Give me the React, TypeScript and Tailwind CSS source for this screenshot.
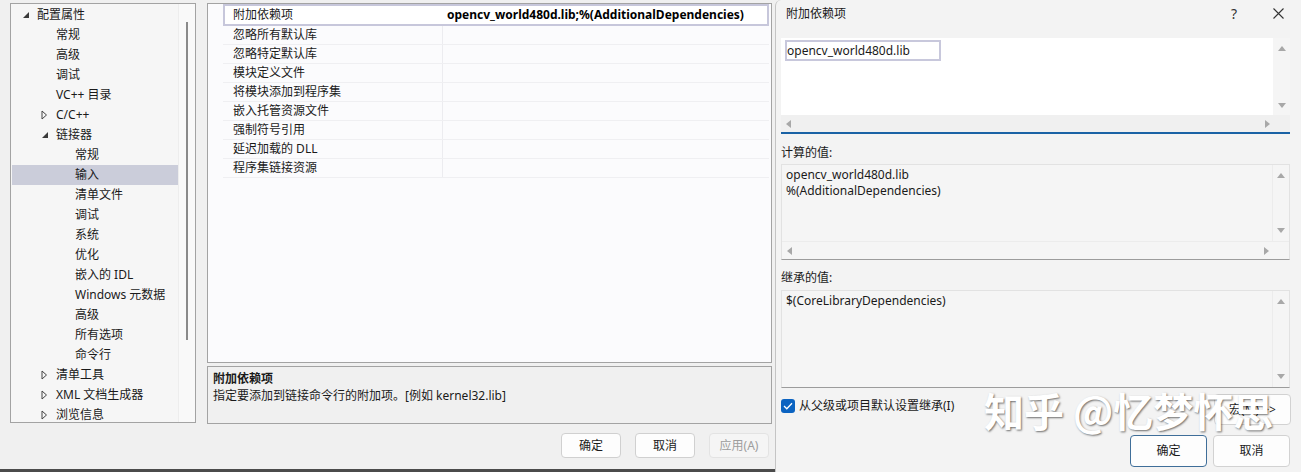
import React from 'react';

type TreeNode = { label: string; level: 0 | 1 | 2; arrow?: 'open' | 'closed'; selected?: boolean };

const tree: TreeNode[] = [
  { label: '配置属性', level: 0, arrow: 'open' },
  { label: '常规', level: 1 },
  { label: '高级', level: 1 },
  { label: '调试', level: 1 },
  { label: 'VC++ 目录', level: 1 },
  { label: 'C/C++', level: 1, arrow: 'closed' },
  { label: '链接器', level: 1, arrow: 'open' },
  { label: '常规', level: 2 },
  { label: '输入', level: 2, selected: true },
  { label: '清单文件', level: 2 },
  { label: '调试', level: 2 },
  { label: '系统', level: 2 },
  { label: '优化', level: 2 },
  { label: '嵌入的 IDL', level: 2 },
  { label: 'Windows 元数据', level: 2 },
  { label: '高级', level: 2 },
  { label: '所有选项', level: 2 },
  { label: '命令行', level: 2 },
  { label: '清单工具', level: 1, arrow: 'closed' },
  { label: 'XML 文档生成器', level: 1, arrow: 'closed' },
  { label: '浏览信息', level: 1, arrow: 'closed' },
];

const indent = { 0: 'pl-[9px]', 1: 'pl-[28px]', 2: 'pl-[47px]' };

const props = [
  '忽略所有默认库',
  '忽略特定默认库',
  '模块定义文件',
  '将模块添加到程序集',
  '嵌入托管资源文件',
  '强制符号引用',
  '延迟加载的 DLL',
  '程序集链接资源',
];

function Arrow({ kind }: { kind?: 'open' | 'closed' }) {
  if (kind === 'open')
    return (
      <svg width="7" height="7" className="ml-[2px]">
        <polygon points="6,0 6,6 0,6" fill="#3a3a3a" />
      </svg>
    );
  if (kind === 'closed')
    return (
      <svg width="7" height="10" className="ml-[1px]">
        <polygon points="1,1 5.5,5 1,9" fill="none" stroke="#444" strokeWidth="1" />
      </svg>
    );
  return null;
}

function Tri({ dir }: { dir: 'up' | 'down' | 'left' | 'right' }) {
  const pts = {
    up: '0,5 4,0 8,5',
    down: '0,0 8,0 4,5',
    left: '5,0 5,8 0,4',
    right: '0,0 5,4 0,8',
  }[dir];
  const vertical = dir === 'up' || dir === 'down';
  return (
    <svg width={vertical ? 8 : 5} height={vertical ? 5 : 8}>
      <polygon points={pts} fill="#a8a8a8" />
    </svg>
  );
}

function Btn({ children, disabled }: { children: React.ReactNode; disabled?: boolean }) {
  return (
    <div
      className={`w-[60px] h-[25px] rounded-[4px] border flex items-center justify-center text-[12px] ${
        disabled ? 'border-[#e3e3e3] bg-[#f5f5f5] text-[#9d9d9d]' : 'border-[#d0d0d0] bg-[#fdfdfd] text-[#1a1a1a]'
      }`}
    >
      {children}
    </div>
  );
}

function ReadBox({ h, lines, hScroll }: { h: string; lines: string[]; hScroll?: boolean }) {
  return (
    <div className={`${h} flex flex-col border border-[#e2e2e2] border-b-[#9c9c9c] bg-[#f5f5f5]`}>
      <div className="flex flex-1">
        <div className="flex-1 pl-[4px] pt-[2px] text-[12px] leading-[16px] text-[#1a1a1a]">
          {lines.map((l) => (
            <div key={l}>{l}</div>
          ))}
        </div>
        <div className="w-[17px] flex flex-col items-center justify-between pt-[8px] pb-[8px] border-l border-[#ececec]">
          <Tri dir="up" />
          <Tri dir="down" />
        </div>
      </div>
      {hScroll && (
        <div className="h-[18px] flex items-center justify-between pl-[5px] pr-[20px] border-t border-[#ececec]">
          <Tri dir="left" />
          <Tri dir="right" />
        </div>
      )}
    </div>
  );
}

export default function App() {
  return (
    <div className="flex w-[1301px] h-[472px] overflow-hidden bg-[#f0f0f0] text-[#1a1a1a] font-['Noto_Sans','Noto_Sans_CJK_SC',sans-serif]">
      {/* Property pages dialog */}
      <div className="w-[775px] flex flex-col border-b-[3px] border-[#4b4b4b]">
        <div className="flex pt-[3px] pl-[10px] gap-[11px]">
          {/* tree */}
          <div className="w-[186px] h-[420px] flex border border-[#a3a3a3] bg-[#f6f6f6]">
            <div className="flex-1 pl-[1px] pt-[1px]">
              {tree.map((n, i) => (
                <div
                  key={i}
                  className={`h-[20px] flex items-center text-[12px] ${indent[n.level]} ${n.selected ? 'bg-[#cbcdda]' : ''}`}
                >
                  <div className="w-[16px] flex items-center">
                    <Arrow kind={n.arrow} />
                  </div>
                  <span>{n.label}</span>
                </div>
              ))}
            </div>
            <div className="w-[17px] bg-[#f9f9f9] border-l border-[#ededed] flex justify-center pt-[18px]">
              <div className="w-[2px] h-[318px] bg-[#8a8a8a]" />
            </div>
          </div>

          {/* grid + description */}
          <div className="w-[565px] flex flex-col gap-[3px]">
            <div className="h-[360px] border border-[#a3a3a3] bg-[#fbfbfd] flex">
              <div className="w-[15px]" />
              <div className="flex-1 pr-[2px]">
                <div className="h-[22px] flex items-center border-2 border-[#c7c7db] bg-white text-[12px]">
                  <div className="w-[218px] pl-[8px]">附加依赖项</div>
                  <div className="pl-[4px] font-bold text-black">opencv_world480d.lib;%(AdditionalDependencies)</div>
                </div>
                {props.map((p) => (
                  <div key={p} className="h-[19px] flex items-center border-b border-[#efeff2] text-[12px]">
                    <div className="w-[220px] h-full flex items-center pl-[10px] border-r border-[#ececf0]">{p}</div>
                    <div className="flex-1" />
                  </div>
                ))}
              </div>
            </div>
            <div className="h-[58px] border border-[#a3a3a3] bg-[#f0f0f0] pl-[5px] pt-[3px] text-[12px] leading-[17px]">
              <div className="font-bold">附加依赖项</div>
              <div>指定要添加到链接命令行的附加项。[例如 kernel32.lib]</div>
            </div>
          </div>
        </div>
        <div className="flex justify-end gap-[14px] pr-[6px] mt-[9px]">
          <Btn>确定</Btn>
          <Btn>取消</Btn>
          <Btn disabled>应用(A)</Btn>
        </div>
      </div>

      {/* Additional dependencies dialog */}
      <div className="relative flex-1 flex flex-col bg-[#f3f3f3] border-l border-[#c4c4c4] rounded-tl-[6px] pl-[5px] pr-[11px]">
        <div className="h-[27px] flex items-center justify-between text-[12px]">
          <span className="pl-[5px]">附加依赖项</span>
          <div className="flex items-center gap-[36px] pr-[6px]">
            <span className="text-[14px] text-[#333]">?</span>
            <svg width="11" height="11">
              <path d="M0.5 0.5 L10.5 10.5 M10.5 0.5 L0.5 10.5" stroke="#333" strokeWidth="1.1" />
            </svg>
          </div>
        </div>

        <div className="mt-[11px] flex flex-col">
          <div className="h-[77px] flex">
            <div className="flex-1 bg-white pl-[4px] pt-[2px]">
              <div className="w-[156px] h-[21px] border-2 border-[#c8c8dc] flex items-center text-[12px]">
                opencv_world480d.lib
              </div>
            </div>
            <div className="w-[17px] bg-[#f5f5f5] flex flex-col items-center justify-between pt-[8px] pb-[7px]">
              <Tri dir="up" />
              <Tri dir="down" />
            </div>
          </div>
          <div className="h-[17px] bg-[#f0f0f0] flex items-center justify-between pl-[5px] pr-[20px]">
            <Tri dir="left" />
            <Tri dir="right" />
          </div>
          <div className="h-[2px] bg-[#1a62a5]" />
        </div>

        <div className="h-[30px] pt-[10px] leading-[18px] text-[12px]">计算的值:</div>
        <ReadBox h="h-[96px]" lines={['opencv_world480d.lib', '%(AdditionalDependencies)']} hScroll />

        <div className="h-[30px] pt-[9px] leading-[18px] text-[12px]">继承的值:</div>
        <ReadBox h="h-[98px]" lines={['$(CoreLibraryDependencies)']} />

        <div className="flex items-start justify-between mt-[6px]">
          <div className="flex items-center gap-[4px] mt-[3px] text-[12px]">
            <div className="w-[14px] h-[14px] rounded-[3px] bg-[#0b63c1] flex items-center justify-center">
              <svg width="10" height="8">
                <path d="M1 4 L3.8 6.8 L9 1.2" stroke="white" strokeWidth="1.3" fill="none" />
              </svg>
            </div>
            <span>从父级或项目默认设置继承(I)</span>
          </div>
          <div className="w-[77px] h-[31px] rounded-[4px] border border-[#d2d2d2] bg-[#fdfdfd] flex items-center justify-center text-[12px] mr-[-1px]">
            宏(M) &gt;&gt;
          </div>
        </div>
        <div className="flex justify-end gap-[6px] mt-[10px]">
          <div className="w-[77px] h-[32px] rounded-[4px] border border-[#3f6e99] bg-[#fdfdfd] flex items-center justify-center text-[12px]">
            确定
          </div>
          <div className="w-[77px] h-[32px] rounded-[4px] border border-[#d2d2d2] bg-[#fdfdfd] flex items-center justify-center text-[12px]">
            取消
          </div>
        </div>

        {/* watermark */}
        <div className="absolute left-[208px] top-[390px] text-[40px] leading-none font-semibold text-white whitespace-nowrap [text-shadow:1px_1px_2px_rgba(0,0,0,0.55)] font-['Noto_Sans_CJK_SC',sans-serif]">
          知乎 @忆梦怀思
        </div>
      </div>
    </div>
  );
}
